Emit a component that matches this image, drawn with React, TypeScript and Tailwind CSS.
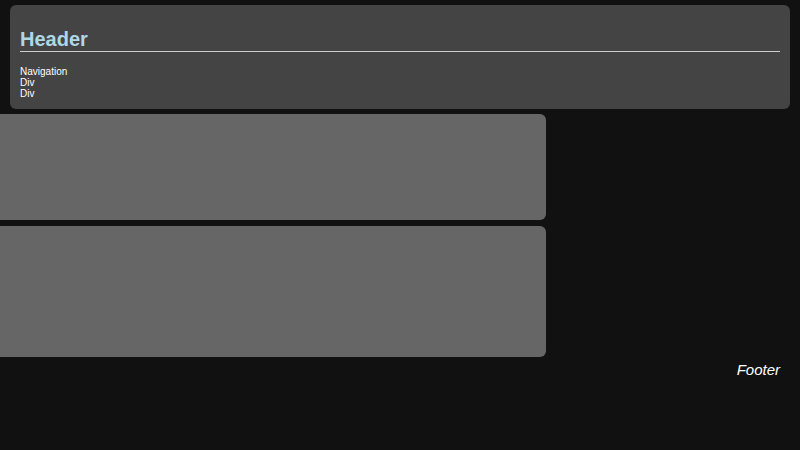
export default function App() {
    return (
        <div className="min-h-screen w-full bg-[#111111] pt-[5px] font-['Liberation_Sans',Arial,sans-serif] text-white">
            <header className="mx-[10px] rounded-md bg-[#444444] px-[10px] pt-[10px] pb-[10px]">
                <h1 className="mt-[13px] text-[20px] leading-[23px] font-bold text-[#add8e6]">Header</h1>
                <hr className="border-t border-[#cccccc]" />
                <nav className="mt-[14px] text-[10px] leading-[11px]">
                    <div>Navigation</div>
                    <div>Div</div>
                    <div>Div</div>
                </nav>
            </header>
            <main className="mt-[5px] flex w-[546px] flex-col gap-[6px]">
                <div className="h-[106px] rounded-r-md bg-[#666666]"></div>
                <div className="h-[131px] rounded-r-md bg-[#666666]"></div>
            </main>
            <footer className="mt-[4px] px-[20px] text-right text-[15px] leading-[18px] italic">
                Footer
            </footer>
        </div>
    );
}
